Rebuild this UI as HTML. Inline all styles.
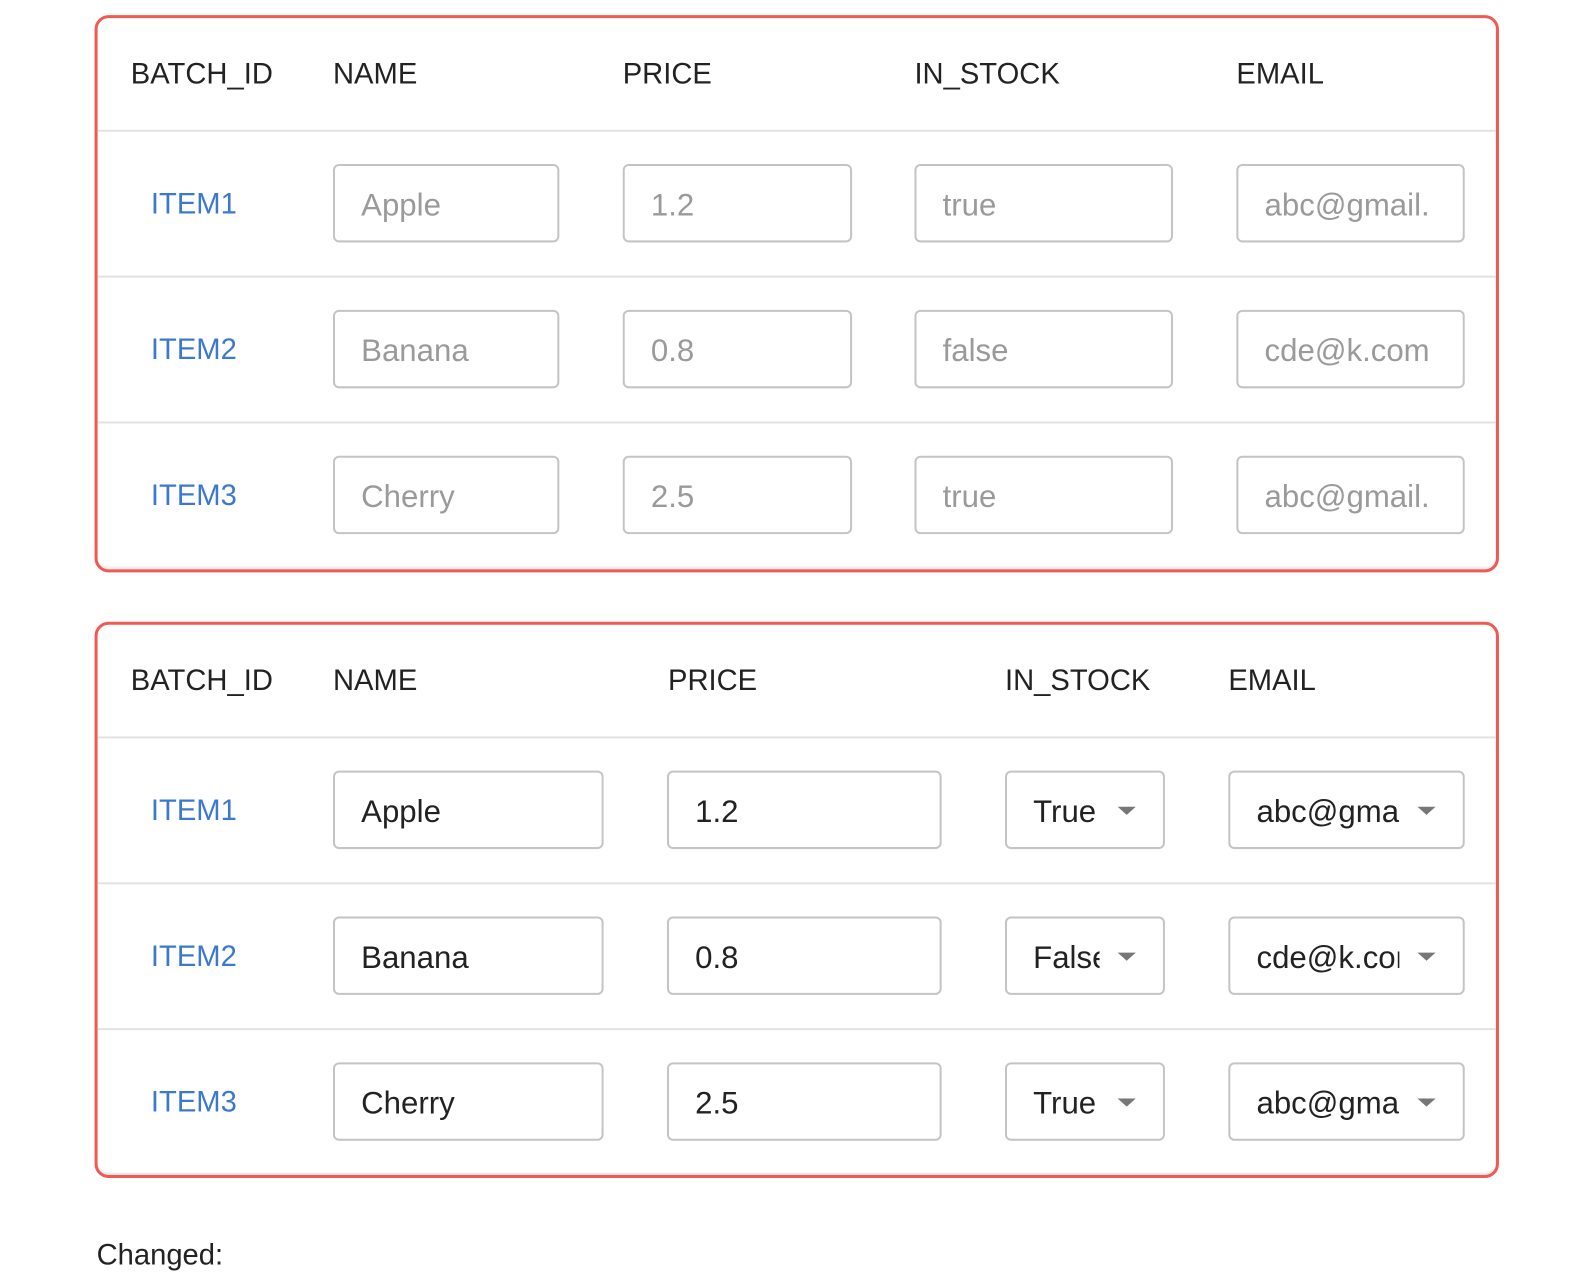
<!DOCTYPE html>
<html><head><meta charset="utf-8"><style>
html,body{margin:0;padding:0;background:#fff;width:1580px;height:1244px;overflow:hidden;font-family:"Liberation Sans",Arial,sans-serif;}
#w{position:absolute;left:0;top:0;width:1580px;height:1244px;transform:scale(1.006);transform-origin:0 0;}
.box{position:absolute;left:94px;width:1390px;border:3px solid #ef5a55;border-radius:14px;box-shadow:inset 0 -3px 2px -1px rgba(0,0,0,0.12);}
.h{position:absolute;font-size:29px;color:#222;line-height:32px;white-space:nowrap;}
.id{position:absolute;font-size:29px;color:#3b78cf;line-height:32px;left:150px;}
.ln{position:absolute;left:97px;width:1390px;height:2px;background:#e2e2e2;}
.in{position:absolute;height:74px;border:2px solid #c4c4c4;border-radius:6px;box-sizing:content-box;font-size:31px;line-height:77px;padding-left:26px;overflow:hidden;white-space:nowrap;}
.ph{color:#9a9a9a;}
.v{color:#222;}
.sel span.t{display:inline-block;overflow:hidden;vertical-align:top;}
.arr{position:absolute;top:34px;width:0;height:0;border-left:9px solid transparent;border-right:9px solid transparent;border-top:8px solid #777;}
</style></head><body><div id="w">

<div class="box" style="top:15px;height:548px;"></div>
<div class="h" style="left:130px;top:58px;">BATCH_ID</div>
<div class="h" style="left:331px;top:58px;">NAME</div>
<div class="h" style="left:619px;top:58px;">PRICE</div>
<div class="h" style="left:909px;top:58px;">IN_STOCK</div>
<div class="h" style="left:1229px;top:58px;">EMAIL</div>
<div class="ln" style="top:129px;"></div>
<div class="ln" style="top:274px;"></div>
<div class="ln" style="top:419px;"></div>

<div class="id" style="top:187px;">ITEM1</div>
<div class="in ph" style="left:331px;top:163px;width:195px;">Apple</div>
<div class="in ph" style="left:619px;top:163px;width:198px;">1.2</div>
<div class="in ph" style="left:909px;top:163px;width:227px;">true</div>
<div class="in ph" style="left:1229px;top:163px;width:197px;">abc@gmail.</div>

<div class="id" style="top:332px;">ITEM2</div>
<div class="in ph" style="left:331px;top:308px;width:195px;">Banana</div>
<div class="in ph" style="left:619px;top:308px;width:198px;">0.8</div>
<div class="in ph" style="left:909px;top:308px;width:227px;">false</div>
<div class="in ph" style="left:1229px;top:308px;width:197px;">cde@k.com</div>

<div class="id" style="top:477px;">ITEM3</div>
<div class="in ph" style="left:331px;top:453px;width:195px;">Cherry</div>
<div class="in ph" style="left:619px;top:453px;width:198px;">2.5</div>
<div class="in ph" style="left:909px;top:453px;width:227px;">true</div>
<div class="in ph" style="left:1229px;top:453px;width:197px;">abc@gmail.</div>

<div class="box" style="top:618px;height:547px;"></div>
<div class="h" style="left:130px;top:661px;">BATCH_ID</div>
<div class="h" style="left:331px;top:661px;">NAME</div>
<div class="h" style="left:664px;top:661px;">PRICE</div>
<div class="h" style="left:999px;top:661px;">IN_STOCK</div>
<div class="h" style="left:1221px;top:661px;">EMAIL</div>
<div class="ln" style="top:732px;"></div>
<div class="ln" style="top:877px;"></div>
<div class="ln" style="top:1022px;"></div>

<div class="id" style="top:790px;">ITEM1</div>
<div class="in v" style="left:331px;top:766px;width:239px;">Apple</div>
<div class="in v" style="left:663px;top:766px;width:243px;">1.2</div>
<div class="in v sel" style="left:999px;top:766px;width:129px;"><span class="t" style="width:66px;">True</span><div class="arr" style="left:110px;"></div></div>
<div class="in v sel" style="left:1221px;top:766px;width:205px;"><span class="t" style="width:142px;">abc@gmail.com</span><div class="arr" style="left:186px;"></div></div>

<div class="id" style="top:935px;">ITEM2</div>
<div class="in v" style="left:331px;top:911px;width:239px;">Banana</div>
<div class="in v" style="left:663px;top:911px;width:243px;">0.8</div>
<div class="in v sel" style="left:999px;top:911px;width:129px;"><span class="t" style="width:66px;">False</span><div class="arr" style="left:110px;"></div></div>
<div class="in v sel" style="left:1221px;top:911px;width:205px;"><span class="t" style="width:142px;">cde@k.com</span><div class="arr" style="left:186px;"></div></div>

<div class="id" style="top:1080px;">ITEM3</div>
<div class="in v" style="left:331px;top:1056px;width:239px;">Cherry</div>
<div class="in v" style="left:663px;top:1056px;width:243px;">2.5</div>
<div class="in v sel" style="left:999px;top:1056px;width:129px;"><span class="t" style="width:66px;">True</span><div class="arr" style="left:110px;"></div></div>
<div class="in v sel" style="left:1221px;top:1056px;width:205px;"><span class="t" style="width:142px;">abc@gmail.com</span><div class="arr" style="left:186px;"></div></div>

<div class="h" style="left:96px;top:1232px;">Changed:</div>
</div></body></html>
